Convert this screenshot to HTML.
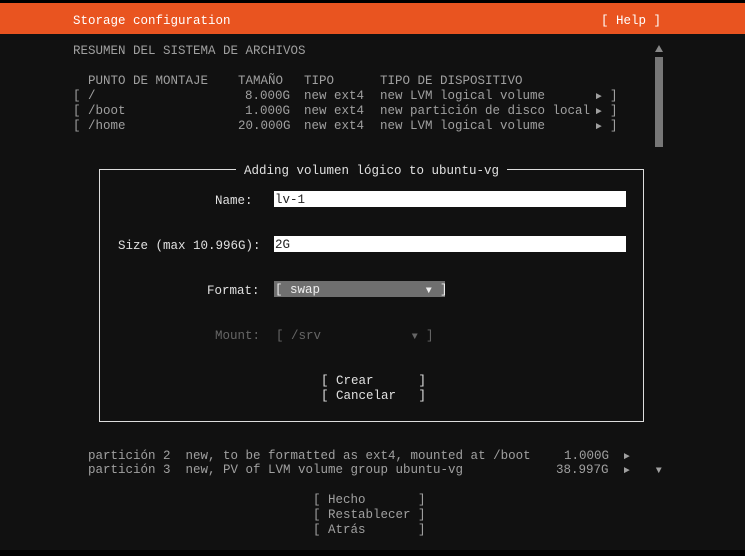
<!DOCTYPE html>
<html><head><meta charset="utf-8"><style>
html,body{margin:0;padding:0;}
body{width:745px;height:556px;background:#111;position:relative;overflow:hidden;font-family:"Liberation Mono","DejaVu Sans Mono",monospace;font-size:12.5px;color:#a0a0a0;}
.t{position:absolute;white-space:pre;line-height:15px;height:15px;margin-top:1px;}
.w{color:#e0e0e0;}
.d{color:#666;}
.a{display:inline-block;width:7.5px;font-size:10px;text-align:center;}
</style></head><body>
<div style="position:absolute;left:0;top:0;width:745px;height:3px;background:#000"></div>
<div style="position:absolute;left:0;top:3px;width:745px;height:31px;background:#e95420"></div>
<div class="t" style="left:73px;top:13px;color:#fff">Storage configuration</div>
<div class="t" style="left:601px;top:13px;color:#fff">[ Help ]</div>

<div class="t" style="left:73px;top:43px">RESUMEN DEL SISTEMA DE ARCHIVOS</div>
<div class="t" style="left:88px;top:73px">PUNTO DE MONTAJE</div>
<div class="t" style="left:238px;top:73px">TAMAÑO</div>
<div class="t" style="left:304px;top:73px">TIPO</div>
<div class="t" style="left:380px;top:73px">TIPO DE DISPOSITIVO</div>

<div class="t" style="left:73px;top:88px">[ /</div>
<div class="t" style="left:245px;top:88px">8.000G</div>
<div class="t" style="left:304px;top:88px">new ext4</div>
<div class="t" style="left:380px;top:88px">new LVM logical volume</div>
<div class="t" style="left:595px;top:88px"><span class="a">►</span> ]</div>

<div class="t" style="left:73px;top:103px">[ /boot</div>
<div class="t" style="left:245px;top:103px">1.000G</div>
<div class="t" style="left:304px;top:103px">new ext4</div>
<div class="t" style="left:380px;top:103px">new partición de disco local</div>
<div class="t" style="left:595px;top:103px"><span class="a">►</span> ]</div>

<div class="t" style="left:73px;top:118px">[ /home</div>
<div class="t" style="left:238px;top:118px">20.000G</div>
<div class="t" style="left:304px;top:118px">new ext4</div>
<div class="t" style="left:380px;top:118px">new LVM logical volume</div>
<div class="t" style="left:595px;top:118px"><span class="a">►</span> ]</div>

<div style="position:absolute;left:655px;top:45px;width:0;height:0;border-left:4px solid transparent;border-right:4px solid transparent;border-bottom:7px solid #888"></div>
<div style="position:absolute;left:655px;top:57px;width:8px;height:90px;background:#777"></div>

<div style="position:absolute;left:99px;top:169px;width:545px;height:253px;border:1px solid #ddd;box-sizing:border-box"></div>
<div class="t w" style="left:236px;top:163px;background:#111;padding:0 8px">Adding volumen lógico to ubuntu-vg</div>

<div class="t w" style="left:215px;top:193px">Name:</div>
<div style="position:absolute;left:274px;top:191px;width:352px;height:16px;background:#fff"></div>
<div class="t" style="left:275px;top:192px;color:#222">lv-1</div>

<div class="t w" style="left:118px;top:238px">Size (max 10.996G):</div>
<div style="position:absolute;left:274px;top:236px;width:352px;height:16px;background:#fff"></div>
<div class="t" style="left:275px;top:237px;color:#222">2G</div>

<div class="t w" style="left:207px;top:283px">Format:</div>
<div style="position:absolute;left:274px;top:281px;width:171px;height:16px;background:#6f6f6f"></div>
<div class="t" style="left:275px;top:282px;color:#eee">[ swap              <span class="a">▼</span> ]</div>

<div class="t d" style="left:215px;top:328px">Mount:</div>
<div class="t d" style="left:276px;top:328px">[ /srv            <span class="a">▼</span> ]</div>

<div class="t w" style="left:321px;top:373px">[ Crear      ]</div>
<div class="t w" style="left:321px;top:388px">[ Cancelar   ]</div>

<div class="t" style="left:88px;top:448px">partición 2  new, to be formatted as ext4, mounted at /boot</div>
<div class="t" style="left:564px;top:448px">1.000G</div>
<div class="t" style="left:623px;top:448px"><span class="a">►</span></div>
<div class="t" style="left:88px;top:462px">partición 3  new, PV of LVM volume group ubuntu-vg</div>
<div class="t" style="left:556px;top:462px">38.997G</div>
<div class="t" style="left:623px;top:462px"><span class="a">►</span></div>
<div class="t" style="left:655px;top:462px"><span class="a">▼</span></div>

<div class="t" style="left:313px;top:492px">[ Hecho       ]</div>
<div class="t" style="left:313px;top:507px">[ Restablecer ]</div>
<div class="t" style="left:313px;top:522px">[ Atrás       ]</div>

<div style="position:absolute;left:0;top:550px;width:745px;height:6px;background:#000"></div>
</body></html>
